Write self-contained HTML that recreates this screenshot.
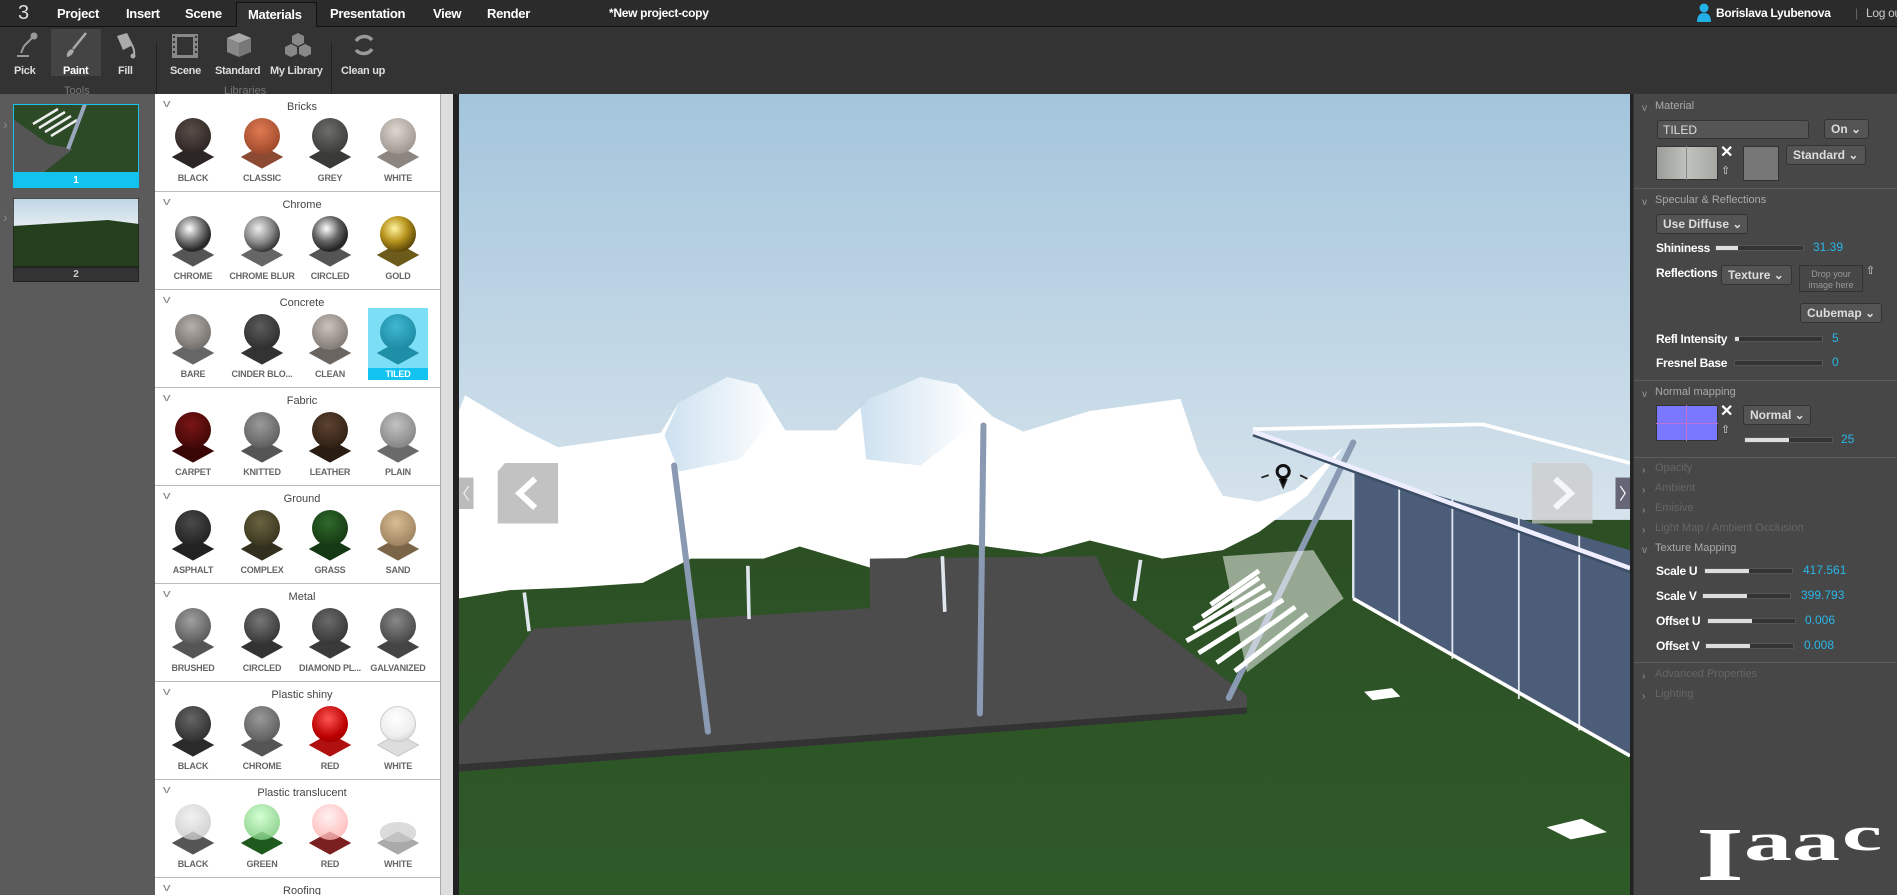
<!DOCTYPE html>
<html><head><meta charset="utf-8">
<style>
*{margin:0;padding:0;box-sizing:border-box}
html,body{width:1897px;height:895px;overflow:hidden}
body{background:#3a3a3a;font-family:"Liberation Sans",Arial,sans-serif;position:relative}
.a{position:absolute}
#menu{left:0;top:0;width:1897px;height:27px;background:#2b2b2b;border-bottom:1px solid #111}
.m{position:absolute;top:6px;color:#fff;font-size:13px;font-weight:bold;letter-spacing:-0.3px;white-space:nowrap}
#tool{left:0;top:27px;width:1897px;height:67px;background:#333}
.tl{position:absolute;top:38px;color:#ddd;font-size:11px;font-weight:bold;letter-spacing:-0.3px;text-align:center;white-space:nowrap}
.grp{position:absolute;top:58px;color:#777;font-size:11px}
.sep{position:absolute;top:15px;width:1px;height:55px;background:#222}
#left{left:0;top:94px;width:155px;height:801px;background:#5b5b5b}
#mat{left:155px;top:94px;width:285px;height:801px;background:#fff;overflow:hidden}
.sec{position:absolute;left:0;width:285px;height:98px;border-bottom:1px solid #bbb}
.sh{position:absolute;top:7px;left:0;width:294px;text-align:center;font-size:11px;color:#444}
.cv{position:absolute;left:9px;top:4px;color:#888;font-size:11px;transform:scaleX(1.4)}
.t{position:absolute;top:18px;width:60px;height:72px}
.b{position:absolute;left:12px;top:6px;width:36px;height:36px;border-radius:50%}
.p{position:absolute;left:15px;top:30px;width:30px;height:30px;transform:scaleY(.55) rotate(45deg);}
.n{position:absolute;left:-5px;top:61px;width:70px;text-align:center;font-size:9px;font-weight:bold;color:#666;letter-spacing:-0.2px;white-space:nowrap}
#right{left:1633px;top:94px;width:264px;height:801px;background:#474747;border-left:1px solid #333;overflow:hidden}
.h{position:absolute;left:21px;font-size:11px;color:#aaa;white-space:nowrap}
.hd{color:#666}
.ch{position:absolute;left:8px;font-size:10px;color:#999}
.lb{position:absolute;font-size:12px;font-weight:bold;color:#fff;letter-spacing:-0.3px;white-space:nowrap}
.bar{position:absolute;height:6px;background:#333;border:1px solid #555}
.bar i{position:absolute;left:0;top:0;height:4px;background:#ddd}
.v{position:absolute;font-size:12px;color:#29b6e8}
.dd{position:absolute;height:20px;border:1px solid #333;border-radius:3px;background:#545454;color:#ddd;font-size:12px;font-weight:bold;padding:2px 0 0 6px;white-space:nowrap}
.line{position:absolute;left:0;width:264px;height:1px;background:#5c5c5c}
</style></head><body>
<div id="menu" class="a">
<div class="m" style="left:18px;top:2px;font-size:20px;font-weight:normal;color:#ddd">3</div>
<div class="m" style="left:57px">Project</div>
<div class="m" style="left:126px">Insert</div>
<div class="m" style="left:185px">Scene</div>
<div class="a" style="left:236px;top:2px;width:81px;height:26px;background:#333;border:1px solid #111;border-bottom:none"></div>
<div class="m" style="left:248px;top:7px">Materials</div>
<div class="m" style="left:330px">Presentation</div>
<div class="m" style="left:433px">View</div>
<div class="m" style="left:487px">Render</div>
<div class="m" style="left:609px;font-size:12px">*New project-copy</div>
<svg class="a" style="left:1696px;top:3px" width="16" height="19" viewBox="0 0 16 19"><circle cx="8" cy="5" r="4.5" fill="#22b0e8"/><path d="M1 19 Q1 10 8 10 Q15 10 15 19Z" fill="#22b0e8"/></svg>
<div class="m" style="left:1716px;font-size:12px">Borislava Lyubenova</div>
<div class="m" style="left:1855px;font-size:12px;color:#666;font-weight:normal">|</div>
<div class="m" style="left:1866px;font-size:12px;color:#ccc;font-weight:normal">Log out</div>
</div>
<div id="tool" class="a">
<div class="a" style="left:51px;top:2px;width:50px;height:47px;background:#444"></div>
<svg class="a" style="left:14px;top:4px" width="26" height="28" viewBox="0 0 26 28" stroke="#999" fill="none" stroke-width="2"><path d="M18 3 L22 7 M20 5 L10 15 M10 15 L7 22 M3 25 H15"/><circle cx="20" cy="5" r="2.5" fill="#999"/></svg>
<svg class="a" style="left:63px;top:4px" width="26" height="28" viewBox="0 0 26 28"><path d="M23 2 L10 18" stroke="#aaa" stroke-width="2.5"/><path d="M9 18 Q3 20 4 26 Q9 25 11 20Z" fill="#aaa"/></svg>
<svg class="a" style="left:113px;top:4px" width="26" height="28" viewBox="0 0 26 28"><path d="M4 5 L14 2 L20 14 L10 19Z" fill="#aaa"/><path d="M19 14 Q22 20 21 24" stroke="#aaa" stroke-width="2" fill="none"/><circle cx="20" cy="25" r="2.5" fill="#aaa"/></svg>
<div class="tl" style="left:14px">Pick</div>
<div class="tl" style="left:63px;color:#fff">Paint</div>
<div class="tl" style="left:118px">Fill</div>
<div class="grp" style="left:64px">Tools</div>
<div class="sep" style="left:156px"></div>
<svg class="a" style="left:171px;top:6px" width="28" height="26" viewBox="0 0 28 26" fill="#888"><rect x="1" y="1" width="26" height="24"/><rect x="6" y="4" width="16" height="18" fill="#333"/><g fill="#333"><rect x="2" y="3" width="2" height="2"/><rect x="2" y="8" width="2" height="2"/><rect x="2" y="13" width="2" height="2"/><rect x="2" y="18" width="2" height="2"/><rect x="24" y="3" width="2" height="2"/><rect x="24" y="8" width="2" height="2"/><rect x="24" y="13" width="2" height="2"/><rect x="24" y="18" width="2" height="2"/></g></svg>
<svg class="a" style="left:225px;top:4px" width="28" height="28" viewBox="0 0 28 28"><path d="M14 2 L26 7 L14 12 L2 7Z" fill="#aaa"/><path d="M2 7 L14 12 L14 26 L2 21Z" fill="#888"/><path d="M26 7 L14 12 L14 26 L26 21Z" fill="#777"/></svg>
<svg class="a" style="left:284px;top:4px" width="28" height="28" viewBox="0 0 28 28" fill="#888"><path d="M14 2 L20 5 L20 12 L14 15 L8 12 L8 5Z"/><path d="M7 13 L13 16 L13 23 L7 26 L1 23 L1 16Z"/><path d="M21 13 L27 16 L27 23 L21 26 L15 23 L15 16Z"/></svg>
<svg class="a" style="left:351px;top:4px" width="26" height="28" viewBox="0 0 26 28" fill="none" stroke="#999" stroke-width="3.5"><path d="M5 10 A10 10 0 0 1 21 9"/><path d="M21 18 A10 10 0 0 1 5 19"/></svg>
<div class="tl" style="left:170px">Scene</div>
<div class="tl" style="left:215px">Standard</div>
<div class="tl" style="left:270px">My Library</div>
<div class="grp" style="left:224px">Libraries</div>
<div class="sep" style="left:331px"></div>
<div class="tl" style="left:341px">Clean up</div>
</div>
<div id="left" class="a">
<div class="a" style="left:3px;top:22px;color:#888;font-size:14px">›</div>
<div class="a" style="left:3px;top:115px;color:#888;font-size:14px">›</div>
<svg class="a" style="left:13px;top:10px" width="126" height="69" viewBox="0 0 126 69"><rect width="126" height="69" fill="#2c4a25"/><polygon points="0,15 35,40 60,45 30,69 0,69" fill="#555"/><g stroke="#eee" stroke-width="2.5"><path d="M20 20 L45 5 M26 24 L52 8 M32 28 L58 12 M38 32 L64 16"/></g><path d="M72 0 L55 45" stroke="#99a6bb" stroke-width="4"/><rect width="126" height="69" fill="none" stroke="#1ac3ef" stroke-width="2"/></svg>
<div class="a" style="left:13px;top:79px;width:126px;height:15px;background:#13c3ef;color:#fff;font-size:10px;font-weight:bold;text-align:center;line-height:15px">1</div>
<svg class="a" style="left:13px;top:104px" width="126" height="69" viewBox="0 0 126 69"><defs><linearGradient id="s2" x1="0" y1="0" x2="0" y2="1"><stop offset="0" stop-color="#bdd4e3"/><stop offset="1" stop-color="#e8eef2"/></linearGradient></defs><rect width="126" height="30" fill="url(#s2)"/><polygon points="0,28 95,22 126,26 126,69 0,69" fill="#243f1e"/><rect width="126" height="69" fill="none" stroke="#222" stroke-width="1.5"/></svg>
<div class="a" style="left:13px;top:173px;width:126px;height:15px;background:#333;border:1px solid #222;color:#ccc;font-size:10px;font-weight:bold;text-align:center;line-height:13px">2</div>
</div>
<div id="mat" class="a">
<div class="sec" style="top:0"><div class="cv">v</div><div class="sh">Bricks</div>
<div class="t" style="left:8px"><div class="p" style="background:#2c2624"></div><div class="b" style="background:radial-gradient(circle at 45% 35%,#5a4d48,#1e1817)"></div><div class="n">BLACK</div></div>
<div class="t" style="left:77px"><div class="p" style="background:#8c4a32"></div><div class="b" style="background:radial-gradient(circle at 45% 35%,#e07a52,#8a3a1f)"></div><div class="n">CLASSIC</div></div>
<div class="t" style="left:145px"><div class="p" style="background:#3a3a38"></div><div class="b" style="background:radial-gradient(circle at 45% 35%,#6d6d6a,#2c2c2a)"></div><div class="n">GREY</div></div>
<div class="t" style="left:213px"><div class="p" style="background:#8d8580"></div><div class="b" style="background:radial-gradient(circle at 45% 35%,#ded7d0,#8a817a)"></div><div class="n">WHITE</div></div></div>
<div class="sec" style="top:98px"><div class="cv">v</div><div class="sh">Chrome</div>
<div class="t" style="left:8px"><div class="p" style="background:#555"></div><div class="b" style="background:radial-gradient(circle at 40% 35%,#fff,#777 40%,#222 70%,#aaa)"></div><div class="n">CHROME</div></div>
<div class="t" style="left:77px"><div class="p" style="background:#666"></div><div class="b" style="background:radial-gradient(circle at 40% 35%,#eee,#888 45%,#333 75%,#aaa)"></div><div class="n">CHROME BLUR</div></div>
<div class="t" style="left:145px"><div class="p" style="background:#555"></div><div class="b" style="background:radial-gradient(circle at 40% 35%,#fff,#666 40%,#222 70%,#999)"></div><div class="n">CIRCLED</div></div>
<div class="t" style="left:213px"><div class="p" style="background:#6b5a1a"></div><div class="b" style="background:radial-gradient(circle at 40% 35%,#fff3a0,#b8951e 40%,#5a4508 75%,#a88a20)"></div><div class="n">GOLD</div></div></div>
<div class="sec" style="top:196px"><div class="cv">v</div><div class="sh">Concrete</div>
<div class="t" style="left:8px"><div class="p" style="background:#666"></div><div class="b" style="background:radial-gradient(circle at 45% 35%,#b5b0ab,#5e5a57)"></div><div class="n">BARE</div></div>
<div class="t" style="left:77px"><div class="p" style="background:#333"></div><div class="b" style="background:radial-gradient(circle at 45% 35%,#5c5c5c,#1e1e1e)"></div><div class="n">CINDER BLO...</div></div>
<div class="t" style="left:145px"><div class="p" style="background:#6a6560"></div><div class="b" style="background:radial-gradient(circle at 45% 35%,#cbc3bb,#6a635e)"></div><div class="n">CLEAN</div></div>
<div class="t" style="left:213px;background:#7ddff5"><div class="p" style="background:#1f8fa8"></div><div class="b" style="background:radial-gradient(circle at 45% 35%,#3fb8d2,#137b93)"></div><div class="n" style="left:0;width:60px;top:60px;height:12px;background:#13c3ef;color:#fff;line-height:12px">TILED</div></div></div>
<div class="sec" style="top:294px"><div class="cv">v</div><div class="sh">Fabric</div>
<div class="t" style="left:8px"><div class="p" style="background:#3a0505"></div><div class="b" style="background:radial-gradient(circle at 45% 35%,#7a1515,#300303)"></div><div class="n">CARPET</div></div>
<div class="t" style="left:77px"><div class="p" style="background:#555"></div><div class="b" style="background:radial-gradient(circle at 45% 35%,#9a9a9a,#4d4d4d)"></div><div class="n">KNITTED</div></div>
<div class="t" style="left:145px"><div class="p" style="background:#2a1c12"></div><div class="b" style="background:radial-gradient(circle at 45% 35%,#5d4330,#21150c)"></div><div class="n">LEATHER</div></div>
<div class="t" style="left:213px"><div class="p" style="background:#6a6a6a"></div><div class="b" style="background:radial-gradient(circle at 45% 35%,#c3c3c3,#727272)"></div><div class="n">PLAIN</div></div></div>
<div class="sec" style="top:392px"><div class="cv">v</div><div class="sh">Ground</div>
<div class="t" style="left:8px"><div class="p" style="background:#222"></div><div class="b" style="background:radial-gradient(circle at 45% 35%,#4a4a4a,#161616)"></div><div class="n">ASPHALT</div></div>
<div class="t" style="left:77px"><div class="p" style="background:#333020"></div><div class="b" style="background:radial-gradient(circle at 45% 35%,#6a6340,#2a2815)"></div><div class="n">COMPLEX</div></div>
<div class="t" style="left:145px"><div class="p" style="background:#153815"></div><div class="b" style="background:radial-gradient(circle at 45% 35%,#2f6a2a,#0f2a0e)"></div><div class="n">GRASS</div></div>
<div class="t" style="left:213px"><div class="p" style="background:#7a6548"></div><div class="b" style="background:radial-gradient(circle at 45% 35%,#d9bd92,#8a7050)"></div><div class="n">SAND</div></div></div>
<div class="sec" style="top:490px"><div class="cv">v</div><div class="sh">Metal</div>
<div class="t" style="left:8px"><div class="p" style="background:#555"></div><div class="b" style="background:radial-gradient(circle at 45% 35%,#a0a0a0,#444)"></div><div class="n">BRUSHED</div></div>
<div class="t" style="left:77px"><div class="p" style="background:#333"></div><div class="b" style="background:radial-gradient(circle at 45% 35%,#777,#222)"></div><div class="n">CIRCLED</div></div>
<div class="t" style="left:145px"><div class="p" style="background:#3a3a3a"></div><div class="b" style="background:radial-gradient(circle at 45% 35%,#6a6a6a,#262626)"></div><div class="n">DIAMOND PL...</div></div>
<div class="t" style="left:213px"><div class="p" style="background:#444"></div><div class="b" style="background:radial-gradient(circle at 45% 35%,#888,#333)"></div><div class="n">GALVANIZED</div></div></div>
<div class="sec" style="top:588px"><div class="cv">v</div><div class="sh">Plastic shiny</div>
<div class="t" style="left:8px"><div class="p" style="background:#2a2a2a"></div><div class="b" style="background:radial-gradient(circle at 45% 35%,#666,#1e1e1e)"></div><div class="n">BLACK</div></div>
<div class="t" style="left:77px"><div class="p" style="background:#555"></div><div class="b" style="background:radial-gradient(circle at 45% 35%,#999,#4a4a4a)"></div><div class="n">CHROME</div></div>
<div class="t" style="left:145px"><div class="p" style="background:#b01010"></div><div class="b" style="background:radial-gradient(circle at 45% 35%,#f55,#b00 60%,#800)"></div><div class="n">RED</div></div>
<div class="t" style="left:213px"><div class="p" style="background:#ddd;border:1px solid #bbb"></div><div class="b" style="background:radial-gradient(circle at 45% 35%,#fff,#eee 60%,#bbb);border:1px solid #ccc"></div><div class="n">WHITE</div></div></div>
<div class="sec" style="top:686px"><div class="cv">v</div><div class="sh">Plastic translucent</div>
<div class="t" style="left:8px"><div class="p" style="background:#555"></div><div class="b" style="background:radial-gradient(circle at 45% 35%,#eee,#bbb);opacity:.8"></div><div class="n">BLACK</div></div>
<div class="t" style="left:77px"><div class="p" style="background:#1e5a1e"></div><div class="b" style="background:radial-gradient(circle at 45% 35%,#cfc,#6b6);opacity:.85"></div><div class="n">GREEN</div></div>
<div class="t" style="left:145px"><div class="p" style="background:#7a2020"></div><div class="b" style="background:radial-gradient(circle at 45% 35%,#fee,#f99);opacity:.8"></div><div class="n">RED</div></div>
<div class="t" style="left:213px"><div class="p" style="background:#aaa"></div><div class="b" style="top:24px;height:20px;border-radius:50% 50% 40% 40%;background:#ccc;opacity:.7"></div><div class="n">WHITE</div></div></div>
<div class="sec" style="top:784px;height:17px;border:none"><div class="cv">v</div><div class="sh">Roofing</div></div>
</div>
<div class="a" style="left:440px;top:94px;width:13px;height:801px;background:#ddd;border-left:1px solid #aaa"></div>
<div class="a" style="left:453px;top:94px;width:6px;height:801px;background:#222"></div>
<svg class="a" style="left:459px;top:94px" width="1171" height="801" viewBox="378 78 969 662" preserveAspectRatio="none">
<defs>
<linearGradient id="sky" x1="0" y1="0" x2="0" y2="1"><stop offset="0" stop-color="#a3c5dc"/><stop offset=".6" stop-color="#dde7ee"/><stop offset="1" stop-color="#eef2f5"/></linearGradient>
<linearGradient id="gr" x1="0" y1="0" x2="0" y2="1"><stop offset="0" stop-color="#2c4f24"/><stop offset="1" stop-color="#2e5a28"/></linearGradient>
<linearGradient id="mb" x1="0" y1="0" x2="1" y2="0"><stop offset="0" stop-color="#b8d4ea"/><stop offset="1" stop-color="#fff"/></linearGradient>
</defs>
<rect x="378" y="78" width="969" height="662" fill="url(#sky)"/>
<rect x="378" y="430" width="969" height="310" fill="url(#gr)"/>
<path d="M378 340 L383 327 L430 355 L460 370 L545 358 L560 333 L600 312 L625 318 L648 356 L690 356 L718 330 L760 312 L790 318 L820 345 L845 357 L900 340 L975 330 L990 375 L1010 410 L1040 415 L1070 405 L1110 370 L1080 410 L1040 440 L1010 455 L960 462 L900 447 L860 458 L800 450 L760 458 L720 470 L660 452 L630 462 L570 462 L530 482 L470 486 L420 488 L378 495Z" fill="#fff"/>
<path d="M548 360 L560 333 L600 312 L625 318 L640 345 L610 380 L560 390Z" fill="url(#mb)" opacity=".7"/>
<path d="M710 335 L718 330 L760 312 L790 318 L805 350 L760 385 L715 380Z" fill="url(#mb)" opacity=".7"/>
<polygon points="378,627 378,600 440,520 718,503 718,462 905,460 920,492 1030,575 1030,585 378,632" fill="#4c4c4c"/>
<polygon points="378,632 1030,585 1030,590 378,638" fill="#333"/>
<g stroke="#dfe6ee" stroke-width="3"><path d="M432 490 L436 522"/><path d="M617 468 L618 512"/><path d="M778 460 L780 506"/><path d="M942 463 L937 497"/></g>
<g stroke="#8a9ab3" stroke-width="5" stroke-linecap="round"><path d="M556 385 L584 605"/><path d="M812 352 L809 590"/><path d="M1118 366 L1015 577"/></g>
<g stroke="#fff" stroke-width="4"><path d="M1000 500 L1040 472 M993 510 L1040 478 M986 520 L1045 484 M980 530 L1050 490 M990 540 L1060 496 M1005 548 L1070 502 M1020 555 L1080 508"/></g>
<path d="M1010 460 L1085 455 L1110 495 L1030 556Z" fill="#fff" opacity=".5"/>
<polygon points="1118,390 1347,455 1347,625 1118,495" fill="#4b5d78"/>
<g stroke="#dfe6ee" stroke-width="1.5"><path d="M1156 400 L1156 518 M1200 412 L1200 545 M1255 428 L1255 578 M1305 443 L1305 604"/></g>
<path d="M1118 495 L1347 625" stroke="#fff" stroke-width="3"/>
<path d="M1118 390 L1118 495" stroke="#dfe6ee" stroke-width="2"/>
<path d="M1035 355 L1225 351 L1347 383" stroke="#fff" stroke-width="3" fill="none"/>
<path d="M1035 357 L1347 470" stroke="#eef" stroke-width="4"/>
<path d="M1035 360 L1347 473" stroke="#3c4d66" stroke-width="2"/>
<polygon points="1127,572 1150,569 1157,576 1134,579" fill="#fff"/>
<polygon points="1278,684 1307,677 1328,688 1298,694" fill="#fff"/>
<circle cx="1060" cy="390" r="5" fill="none" stroke="#111" stroke-width="2.5"/>
<path d="M1042 395 L1048 393 M1074 393 L1080 396 M1057 396 L1060 403 L1063 396" stroke="#222" stroke-width="1.5"/>
<path d="M416 383 L460 383 L460 433 L410 433 L410 390Z" fill="#bbb" opacity=".9"/>
<path d="M441 396 L428 408 L441 420" stroke="#fff" stroke-width="5" fill="none"/>
<path d="M1266 383 L1310 383 L1316 390 L1316 433 L1266 433Z" fill="#ccc" opacity=".7"/>
<path d="M1285 396 L1298 408 L1285 420" stroke="#fff" stroke-width="5" fill="none" opacity=".8"/>
<rect x="378" y="395" width="12" height="26" fill="#bbb"/>
<rect x="1335" y="395" width="12" height="26" fill="#667"/>
<path d="M386 402 L382 408 L386 414" stroke="#eee" fill="none"/>
<path d="M1339 402 L1343 408 L1339 414" stroke="#fff" fill="none"/>
</svg>
<div class="a" style="left:1630px;top:94px;width:3px;height:801px;background:#222"></div>
<div id="right" class="a">
<span class="ch" style="top:9px">v</span><span class="h" style="top:6px">Material</span>
<div class="a" style="left:23px;top:26px;width:152px;height:19px;border:1px solid #333;border-radius:3px;background:#555;color:#ddd;font-size:12px;padding:2px 5px">TILED</div>
<div class="dd" style="left:190px;top:25px;width:45px">On ⌄</div>
<div class="a" style="left:22px;top:52px;width:62px;height:34px;background:linear-gradient(90deg,#9a9d98,#c0c2bd 50%,#a5a8a3);border:1px solid #333"></div>
<div class="a" style="left:52px;top:52px;width:1px;height:34px;background:#888"></div>
<div class="a" style="left:86px;top:48px;color:#fff;font-size:16px;font-weight:bold">✕</div>
<div class="a" style="left:87px;top:70px;color:#ddd;font-size:11px">⇧</div>
<div class="a" style="left:109px;top:52px;width:36px;height:35px;background:#777;border:1px solid #333"></div>
<div class="dd" style="left:152px;top:51px;width:80px">Standard ⌄</div>
<div class="line" style="top:94px"></div>
<span class="ch" style="top:103px">v</span><span class="h" style="top:100px">Specular &amp; Reflections</span>
<div class="dd" style="left:22px;top:120px;width:92px">Use Diffuse ⌄</div>
<span class="lb" style="left:22px;top:147px">Shininess</span><div class="bar" style="left:81px;top:151px;width:89px"><i style="width:22px"></i></div><span class="v" style="left:179px;top:146px">31.39</span>
<span class="lb" style="left:22px;top:172px">Reflections</span>
<div class="dd" style="left:87px;top:171px;width:71px">Texture ⌄</div>
<div class="a" style="left:165px;top:171px;width:64px;height:27px;border:1px solid #333;color:#999;font-size:9px;text-align:center;line-height:11px;padding-top:3px">Drop your<br>image here</div>
<div class="a" style="left:232px;top:170px;color:#ddd;font-size:11px">⇧</div>
<div class="dd" style="left:166px;top:209px;width:82px">Cubemap ⌄</div>
<span class="lb" style="left:22px;top:238px">Refl Intensity</span><div class="bar" style="left:100px;top:242px;width:89px"><i style="width:4px"></i></div><span class="v" style="left:198px;top:237px">5</span>
<span class="lb" style="left:22px;top:262px">Fresnel Base</span><div class="bar" style="left:100px;top:266px;width:89px"></div><span class="v" style="left:198px;top:261px">0</span>
<div class="line" style="top:286px"></div>
<span class="ch" style="top:295px">v</span><span class="h" style="top:292px">Normal mapping</span>
<div class="a" style="left:22px;top:311px;width:62px;height:36px;background:#7a78ff;border:1px solid #333"></div>
<div class="a" style="left:52px;top:311px;width:1px;height:36px;background:#c070d0"></div>
<div class="a" style="left:22px;top:329px;width:62px;height:1px;background:#c070d0"></div>
<div class="a" style="left:86px;top:307px;color:#fff;font-size:16px;font-weight:bold">✕</div>
<div class="a" style="left:87px;top:329px;color:#ddd;font-size:11px">⇧</div>
<div class="dd" style="left:109px;top:311px;width:68px">Normal ⌄</div>
<div class="bar" style="left:110px;top:343px;width:89px"><i style="width:44px"></i></div><span class="v" style="left:207px;top:338px">25</span>
<div class="line" style="top:363px"></div>
<span class="ch hd" style="top:371px">›</span><span class="h hd" style="top:368px">Opacity</span>
<span class="ch hd" style="top:391px">›</span><span class="h hd" style="top:388px">Ambient</span>
<span class="ch hd" style="top:411px">›</span><span class="h hd" style="top:408px">Emisive</span>
<span class="ch hd" style="top:431px">›</span><span class="h hd" style="top:428px">Light Map / Ambient Occlusion</span>
<span class="ch" style="top:451px">v</span><span class="h" style="top:448px">Texture Mapping</span>
<span class="lb" style="left:22px;top:470px">Scale U</span><div class="bar" style="left:70px;top:474px;width:89px"><i style="width:44px"></i></div><span class="v" style="left:169px;top:469px">417.561</span>
<span class="lb" style="left:22px;top:495px">Scale V</span><div class="bar" style="left:68px;top:499px;width:89px"><i style="width:44px"></i></div><span class="v" style="left:167px;top:494px">399.793</span>
<span class="lb" style="left:22px;top:520px">Offset U</span><div class="bar" style="left:73px;top:524px;width:89px"><i style="width:44px"></i></div><span class="v" style="left:171px;top:519px">0.006</span>
<span class="lb" style="left:22px;top:545px">Offset V</span><div class="bar" style="left:71px;top:549px;width:89px"><i style="width:44px"></i></div><span class="v" style="left:170px;top:544px">0.008</span>
<div class="line" style="top:568px"></div>
<span class="ch hd" style="top:577px">›</span><span class="h hd" style="top:574px">Advanced Properties</span>
<span class="ch hd" style="top:597px">›</span><span class="h hd" style="top:594px">Lighting</span>
<svg class="a" style="left:62px;top:726px" width="190" height="64" viewBox="0 0 190 64">
<g fill="#fff" font-family="Liberation Serif, serif" font-weight="bold">
<text x="0" y="60" font-size="76" textLength="48" lengthAdjust="spacingAndGlyphs">I</text>
<text x="48" y="40" font-size="54" textLength="96" lengthAdjust="spacingAndGlyphs">aa</text>
<text x="146" y="30" font-size="48" textLength="40" lengthAdjust="spacingAndGlyphs">c</text>
</g></svg>
</div>
</body></html>
